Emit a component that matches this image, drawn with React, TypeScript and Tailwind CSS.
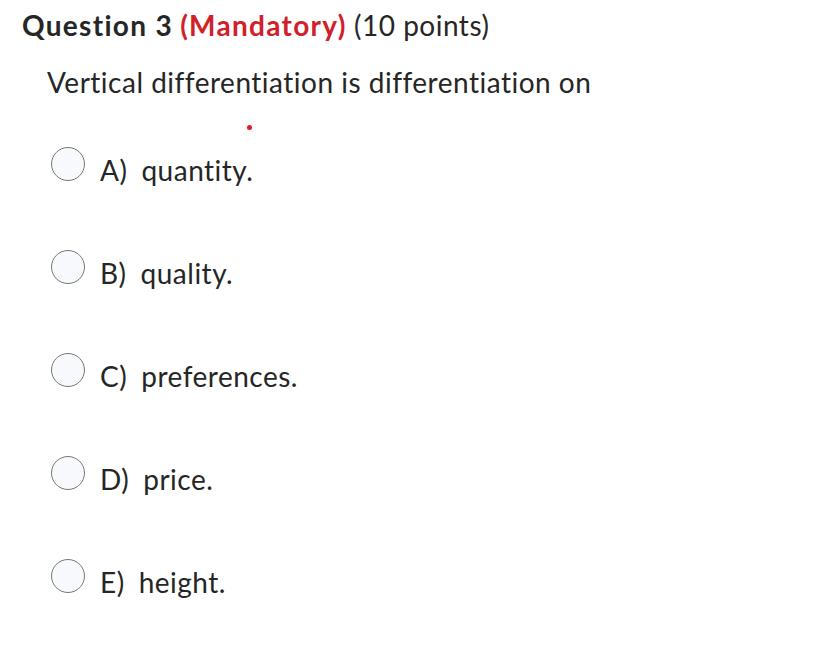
const options = [
  { letter: 'A)', text: 'quantity.' },
  { letter: 'B)', text: 'quality.' },
  { letter: 'C)', text: 'preferences.' },
  { letter: 'D)', text: 'price.' },
  { letter: 'E)', text: 'height.' },
];

export default function App() {
  return (
    <div className="min-h-screen bg-white text-[#262626]" style={{ fontFamily: 'Lato, "Noto Sans", sans-serif' }}>
      <div className="pt-[9px] pl-[22px]">
        {/* Question header */}
        <h2 className="text-[28px] leading-[1.2]">
          <span className="font-bold tracking-[1.3px]">Question 3</span>{' '}
          <span className="font-bold tracking-[1.3px] text-[#d0212b]">(Mandatory)</span>{' '}
          <span className="tracking-[0.5px]">(10 points)</span>
        </h2>

        <div className="pl-[25px]">
          <p className="mt-[23px] text-[28px] leading-[1.2] tracking-[0.5px]">Vertical differentiation is differentiation on</p>

          {/* stray red marker */}
          <div className="h-[48px] pt-[26px] pl-[200px]">
            <div className="w-[5px] h-[5px] rounded-full bg-[#e8191f]" />
          </div>

          {/* Answer choices */}
          <div className="flex flex-col">
            {options.map((o) => (
              <label key={o.letter} className="flex items-start h-[103px] pl-[4px]">
                <span className="w-[34px] h-[34px] rounded-full border border-[#767676] bg-[#f7f9fd] shrink-0" />
                <span className="ml-[15px] pt-[7px] text-[28px] leading-[1.2] tracking-[0.5px]">
                  {o.letter}
                  <span className="ml-[14px]">{o.text}</span>
                </span>
              </label>
            ))}
          </div>
        </div>
      </div>
    </div>
  );
}
